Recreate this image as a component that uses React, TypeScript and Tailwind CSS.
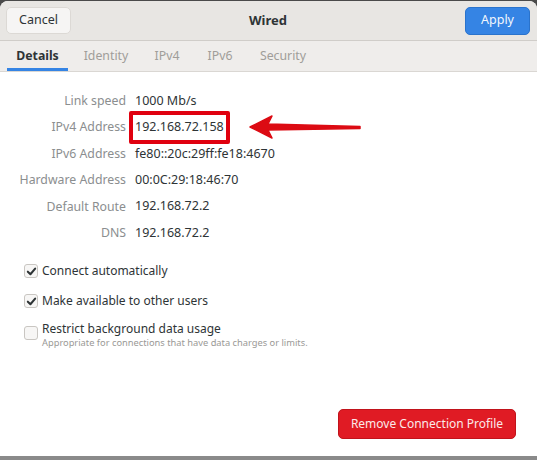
import React from "react";

const font = { fontFamily: '"Noto Sans", "Open Sans", sans-serif' };

function Check({ checked }: { checked: boolean }) {
  return (
    <div className="w-[14px] h-[14px] rounded-[3px] border border-[#c9c6c2] bg-[#f7f6f5] flex items-center justify-center shrink-0">
      {checked && (
        <svg width="11" height="11" viewBox="0 0 12 12">
          <path d="M2 6.2 L4.8 9 L10 2.8" fill="none" stroke="#2e3436" strokeWidth="2.2" strokeLinecap="round" strokeLinejoin="round" />
        </svg>
      )}
    </div>
  );
}

export default function App() {
  const rows: [string, string][] = [
    ["Link speed", "1000 Mb/s"],
    ["IPv4 Address", "192.168.72.158"],
    ["IPv6 Address", "fe80::20c:29ff:fe18:4670"],
    ["Hardware Address", "00:0C:29:18:46:70"],
    ["Default Route", "192.168.72.2"],
    ["DNS", "192.168.72.2"],
  ];
  return (
    <div className="w-[537px] h-[460px] bg-[#4a4a4a] flex flex-col overflow-hidden" style={font}>
      <div className="flex-1 mt-px rounded-t-[8px] overflow-hidden flex flex-col bg-white">
        {/* header */}
        <div className="h-[40px] bg-[#e8e6e3] border-b border-[#d0cdc9] flex items-center justify-between px-[6px] shrink-0">
          <div className="w-[65px] h-[27px] rounded-[5px] bg-[#f6f5f4] border border-[#dcd9d5] flex items-center justify-center text-[12.5px] text-[#2e3436]">
            Cancel
          </div>
          <div className="text-[13px] font-bold text-[#2e3436]">Wired</div>
          <div className="w-[65px] h-[28px] rounded-[5px] bg-[#3584e4] border border-[#2a73cc] flex items-center justify-center text-[12.5px] text-[#f2f7fd] mr-px">
            Apply
          </div>
        </div>
        {/* tabs */}
        <div className="h-[31px] bg-[#efedeb] border-b border-[#dad7d3] flex items-stretch pl-[7px] shrink-0 text-[12.3px]">
          <div className="w-[61px] flex items-center justify-center font-bold text-[#2e3436] border-b-[3px] border-[#3584e4] pt-[3px]">Details</div>
          <div className="w-[76px] flex items-center justify-center text-[#a09d99]">Identity</div>
          <div className="w-[46px] flex items-center justify-center text-[#a09d99]">IPv4</div>
          <div className="w-[60px] flex items-center justify-center text-[#a09d99]">IPv6</div>
          <div className="w-[66px] flex items-center justify-center text-[#a09d99]">Security</div>
        </div>
        {/* content */}
        <div className="flex-1 relative flex flex-col">
          <div className="grid grid-cols-[126px_1fr] gap-x-[9px] mt-[16px]">
            {rows.map(([l, v]) => (
              <React.Fragment key={l}>
                <div className="h-[26.4px] flex items-center justify-end text-[#8b8e8f] text-[12.3px]">{l}</div>
                <div className="h-[26.4px] flex items-center text-[#2e3436] text-[12.5px]">{v}</div>
              </React.Fragment>
            ))}
          </div>
          {/* annotation box */}
          <div className="absolute left-[129px] top-[39px] w-[101px] h-[33px] border-[4px] border-[#e0000f] rounded-[2px]" />
          {/* arrow */}
          <svg className="absolute left-[248px] top-[42px]" width="115" height="26" viewBox="0 0 115 26">
            <path d="M2 13 L24 2 L20 10 L112 12.4 L112 14.4 L20 16 L24 24 Z" fill="#dc0b13" strokeLinejoin="round" stroke="#dc0b13" strokeWidth="1.5" />
          </svg>
          <div className="flex flex-col mt-[10px] pl-[24px] text-[12px] text-[#2e3436]">
            <div className="h-[30px] flex items-center gap-[4px]">
              <Check checked />
              <span>Connect automatically</span>
            </div>
            <div className="h-[30px] flex items-center gap-[4px]">
              <Check checked />
              <span>Make available to other users</span>
            </div>
            <div className="flex items-start gap-[4px] mt-[4px]">
              <div className="mt-[6px]"><Check checked={false} /></div>
              <div className="flex flex-col">
                <span className="leading-[17px]">Restrict background data usage</span>
                <span className="text-[9.3px] text-[#9a9996] leading-[12px]">Appropriate for connections that have data charges or limits.</span>
              </div>
            </div>
          </div>
          <div className="flex-1" />
          <div className="flex justify-end pr-[21px] pb-[17px]">
            <div className="w-[178px] h-[30px] rounded-[5px] bg-[#e01b24] border border-[#c1131b] flex items-center justify-center text-[12px] text-[#fbe9e9]">
              Remove Connection Profile
            </div>
          </div>
        </div>
      </div>
      <div className="h-[4px] bg-[#8a8a8a] shrink-0" />
    </div>
  );
}
